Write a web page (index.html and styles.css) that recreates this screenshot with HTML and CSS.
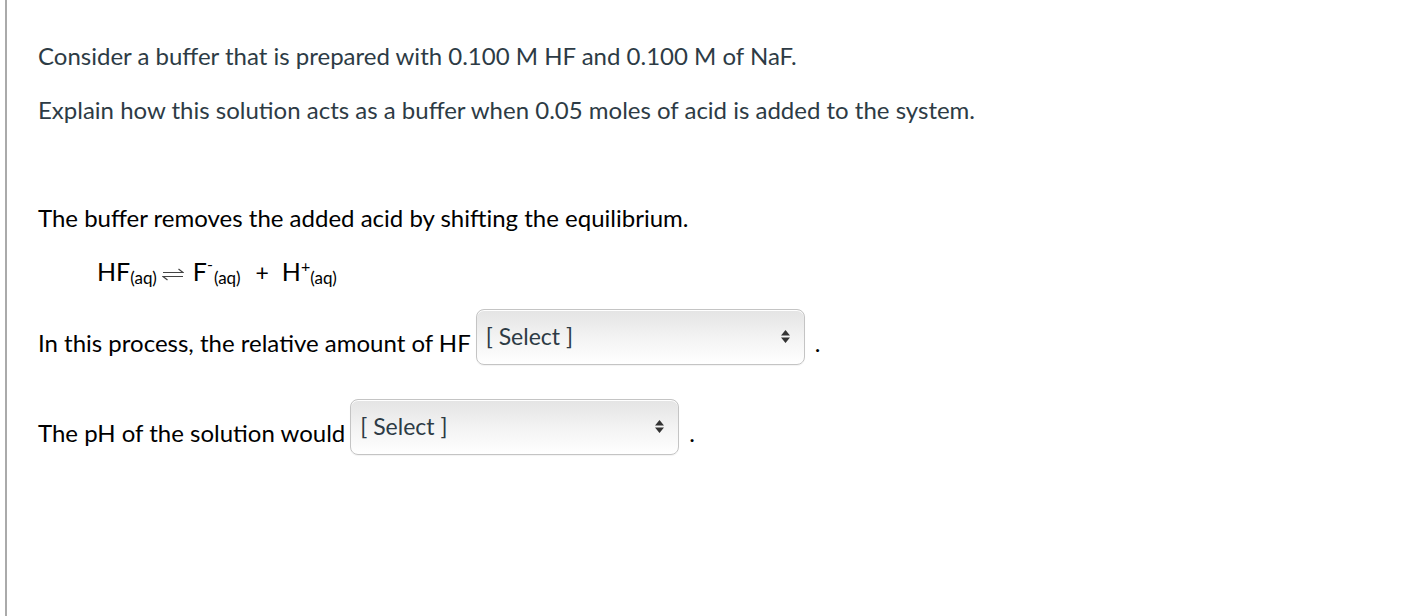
FILE: index.html
```html
<!DOCTYPE html>
<html>
<head>
<meta charset="utf-8">
<link rel="stylesheet" href="styles.css">
</head>
<body>
<div class="frame">
  <div class="content">
    <p class="intro first">Consider a buffer that is prepared with 0.100 M HF and 0.100 M of NaF.</p>
    <p class="intro second">Explain how this solution acts as a buffer when 0.05 moles of acid is added to the system.</p>
    <p class="body-text shift">The buffer removes the added acid by shifting the equilibrium.</p>
    <p class="equation"><span>HF</span><span class="sub">(aq)</span><svg class="arrow" width="22" height="14" viewBox="0 0 22 14"><path d="M1 5.5 H21 L16.5 2 M21 9.5 H1 L5.5 13" fill="none" stroke="#444" stroke-width="1.2"/></svg><span>F</span><span class="sup minus">-</span><span class="sub">(aq)</span><span class="plus">+</span><span>H</span><span class="sup">+</span><span class="sub">(aq)</span></p>
    <div class="answer-row first-answer">
      <span class="body-text">In this process, the relative amount of HF</span>
      <div class="select">
        <span class="select-label">[ Select ]</span>
        <svg class="select-arrows" width="11" height="15" viewBox="0 0 11 15"><path d="M5.5 1 L10 6.5 L1 6.5 Z M1 8.5 L10 8.5 L5.5 14 Z" fill="#333"/></svg>
      </div>
      <span class="body-text dot">.</span>
    </div>
    <div class="answer-row second-answer">
      <span class="body-text">The pH of the solution would</span>
      <div class="select">
        <span class="select-label">[ Select ]</span>
        <svg class="select-arrows" width="11" height="15" viewBox="0 0 11 15"><path d="M5.5 1 L10 6.5 L1 6.5 Z M1 8.5 L10 8.5 L5.5 14 Z" fill="#333"/></svg>
      </div>
      <span class="body-text dot">.</span>
    </div>
  </div>
</div>
</body>
</html>
```
FILE: styles.css
```css
html, body {
  margin: 0;
  padding: 0;
  background: #fff;
}
.frame {
  margin-left: 5px;
  border-left: 2px solid #aaa;
  min-height: 616px;
  box-sizing: border-box;
}
.content {
  padding: 42px 0 0 31px;
  font-family: Lato, "Open Sans", sans-serif;
  font-size: 24px;
  color: #000;
}
p { margin: 0; }
.intro {
  color: #2d3b45;
  line-height: 28px;
}
.second { margin-top: 26px; }
.shift { margin-top: 80px; line-height: 28px; }
.body-text { color: #000; }
.equation {
  margin-top: 25px;
  margin-left: 59px;
  font-family: Lato, "Open Sans", sans-serif;
  font-size: 25px;
  line-height: 28px;
  display: flex;
  align-items: baseline;
}
.equation .sub {
  font-size: 17px;
  position: relative;
  top: 3px;
}
.equation .sup {
  font-size: 16px;
  position: relative;
  top: -9px;
}
.equation .minus {
  top: -11px;
  margin-right: 1px;
}
.arrow {
  align-self: center;
  margin: 2px 9px 0 5px;
}
.plus {
  margin: 0 13px 0 15px;
  font-size: 23px;
}
.answer-row {
  display: flex;
  align-items: flex-start;
  gap: 5px;
}
.first-answer { margin-top: 20px; }
.second-answer { margin-top: 34px; }
.answer-row .body-text {
  line-height: 28px;
  margin-top: 20px;
}
.answer-row .dot {
  margin-left: 5px;
}
.select {
  width: 329px;
  height: 56px;
  box-sizing: border-box;
  border: 1px solid #c4c4c4;
  border-radius: 8px;
  background: linear-gradient(#e4e4e4, #f4f4f4 55%, #ffffff);
  box-shadow: inset 0 1px 0 #fff, 0 1px 1px rgba(0,0,0,0.05);
  display: flex;
  align-items: flex-start;
  justify-content: space-between;
  padding: 12px 13px 0 9px;
}
.select-label {
  color: #2d3b45;
  font-size: 23px;
  line-height: 28px;
}
.select-arrows {
  margin-top: 7px;
}
```
